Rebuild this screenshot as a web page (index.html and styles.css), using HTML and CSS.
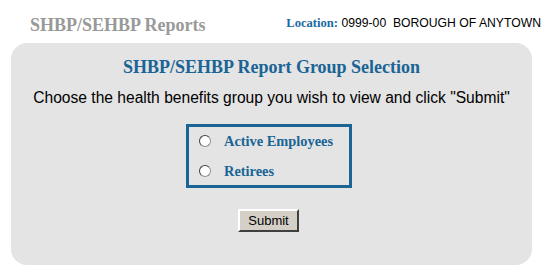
FILE: index.html
```html
<!DOCTYPE html>
<html>
<head>
<meta charset="utf-8">
<link rel="stylesheet" href="styles.css">
</head>
<body>
<div class="top">
  <div class="app-title">SHBP/SEHBP Reports</div>
  <div class="loc"><span class="loc-label">Location:</span> 0999-00&nbsp; BOROUGH OF ANYTOWN</div>
</div>
<div class="panel">
  <h1 class="panel-title">SHBP/SEHBP Report Group Selection</h1>
  <p class="intro">Choose the health benefits group you wish to view and click "Submit"</p>
  <div class="choices">
    <label class="choice"><span class="radio"></span><span class="choice-text">Active Employees</span></label>
    <label class="choice"><span class="radio"></span><span class="choice-text">Retirees</span></label>
  </div>
  <div class="actions"><button class="btn">Submit</button></div>
</div>
</body>
</html>
```
FILE: styles.css
```css
html, body { margin: 0; padding: 0; background: #fff; }
body { width: 554px; height: 273px; overflow: hidden; }
.top {
  display: flex;
  justify-content: space-between;
  align-items: flex-start;
  padding: 13px 13px 0 30px;
  height: 33px;
  box-sizing: border-box;
}
.app-title {
  font-family: "Liberation Serif", serif;
  font-weight: bold;
  font-size: 18px;
  line-height: 24px;
  color: #999999;
}
.loc {
  font-family: "Liberation Sans", sans-serif;
  font-size: 12.2px;
  line-height: 18px;
  margin-top: 1px;
  color: #000;
}
.loc-label {
  font-family: "Liberation Serif", serif;
  font-weight: bold;
  color: #1a6aa0;
  font-size: 12.6px;
}
.panel {
  margin: 10px 22px 0 11px;
  height: 222px;
  background: #e4e4e4;
  border-radius: 16px;
  display: flex;
  flex-direction: column;
  align-items: center;
}
.panel-title {
  margin: 14px 0 0 0;
  font-family: "Liberation Serif", serif;
  font-weight: bold;
  font-size: 18px;
  color: #1a6496;
  line-height: 20px;
}
.intro {
  margin: 11px 0 0 0;
  font-family: "Liberation Sans", sans-serif;
  font-size: 15.6px;
  line-height: 19px;
  color: #000;
}
.choices {
  margin-top: 17px;
  margin-right: 5px;
  border: 3px solid #1a6496;
  width: 150px;
  height: 58px;
  display: flex;
  flex-direction: column;
  gap: 2px;
  padding: 0 0 0 10px;
  box-sizing: content-box;
}
.choice {
  display: flex;
  align-items: center;
  height: 28px;
}
.radio {
  width: 12px;
  height: 12px;
  border-radius: 50%;
  background: #fff;
  border: 1px solid #909090;
  border-top-color: #404040;
  border-left-color: #404040;
  box-sizing: border-box;
  margin-right: 13px;
}
.choice-text {
  font-family: "Liberation Serif", serif;
  font-weight: bold;
  font-size: 14.4px;
  color: #1a6496;
}
.actions { margin-top: 21px; margin-right: 6px; }
.btn {
  font-family: "Liberation Sans", sans-serif;
  font-size: 13px;
  color: #000;
  background: #d4d0c8;
  border: 2px solid;
  border-color: #fff #404040 #404040 #fff;
  padding: 0;
  height: 23px;
  width: 61px;
  display: block;
}
```
